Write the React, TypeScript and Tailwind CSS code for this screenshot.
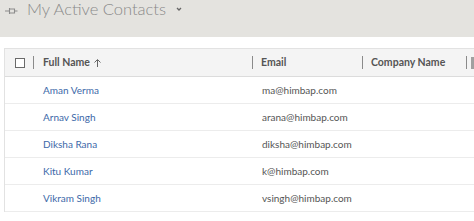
import React from "react";

const contacts = [
  { name: "Aman Verma", email: "ma@himbap.com" },
  { name: "Arnav Singh", email: "arana@himbap.com" },
  { name: "Diksha Rana", email: "diksha@himbap.com" },
  { name: "Kitu Kumar", email: "k@himbap.com" },
  { name: "Vikram Singh", email: "vsingh@himbap.com" },
];

function Sep() {
  return <span className="block w-px h-[13px] bg-[#8a8a8a]" />;
}

export default function App() {
  return (
    <div className="w-[474px] h-[221px] overflow-hidden bg-white font-['Lato',sans-serif]">
      {/* title bar */}
      <div className="h-[37px] bg-[#e4e3df] flex items-start pl-[5px]">
        <svg width="13" height="8" viewBox="0 0 13 8" className="mt-[7px] mr-[9px]" fill="none" stroke="#8c8c8c" strokeWidth="1.1">
          <path d="M0 4h4M4.5 1v6M4.5 2h5v4h-5M9.5 4h3" />
        </svg>
        <span className="text-[16.5px] leading-[19px] font-light text-[#8a8a8a]">My Active Contacts</span>
        <svg width="6" height="4" viewBox="0 0 6 4" className="mt-[7px] ml-[10px]" fill="none" stroke="#666" strokeWidth="1.3">
          <path d="M1 1l2 2 2-2" />
        </svg>
      </div>

      {/* grid */}
      <div className="mt-[11px] ml-[4px] border-l border-t border-[#e2e2e2]">
        <div className="h-[28px] bg-[#f4f4f4] border-b border-[#dcdcdc] flex items-center text-[10.5px] font-bold text-[#555]">
          <div className="w-[28px] flex justify-center pl-[2px]">
            <span className="block w-[10px] h-[10px] border border-[#6a6a6a] bg-white" />
          </div>
          <Sep />
          <div className="w-[218px] pl-[9px] flex items-center gap-[4px]">
            Full Name
            <svg width="7" height="8" viewBox="0 0 7 8" fill="none" stroke="#666" strokeWidth="1">
              <path d="M3.5 8V1M0.5 3.5l3-3 3 3" />
            </svg>
          </div>
          <Sep />
          <div className="w-[109px] pl-[8px]">Email</div>
          <Sep />
          <div className="w-[103px] pl-[8px]">Company Name</div>
          <Sep />
          <div className="flex-1" />
          <span className="block w-[3px] h-[12px] bg-[#a0a0a0]" />
        </div>
        {contacts.map((c) => (
          <div key={c.name} className="h-[27px] border-b border-[#ececec] flex items-center text-[10px]">
            <div className="w-[38px]" />
            <div className="w-[219px] text-[#3c68a8]">{c.name}</div>
            <div className="text-[#555]">{c.email}</div>
          </div>
        ))}
      </div>
    </div>
  );
}
